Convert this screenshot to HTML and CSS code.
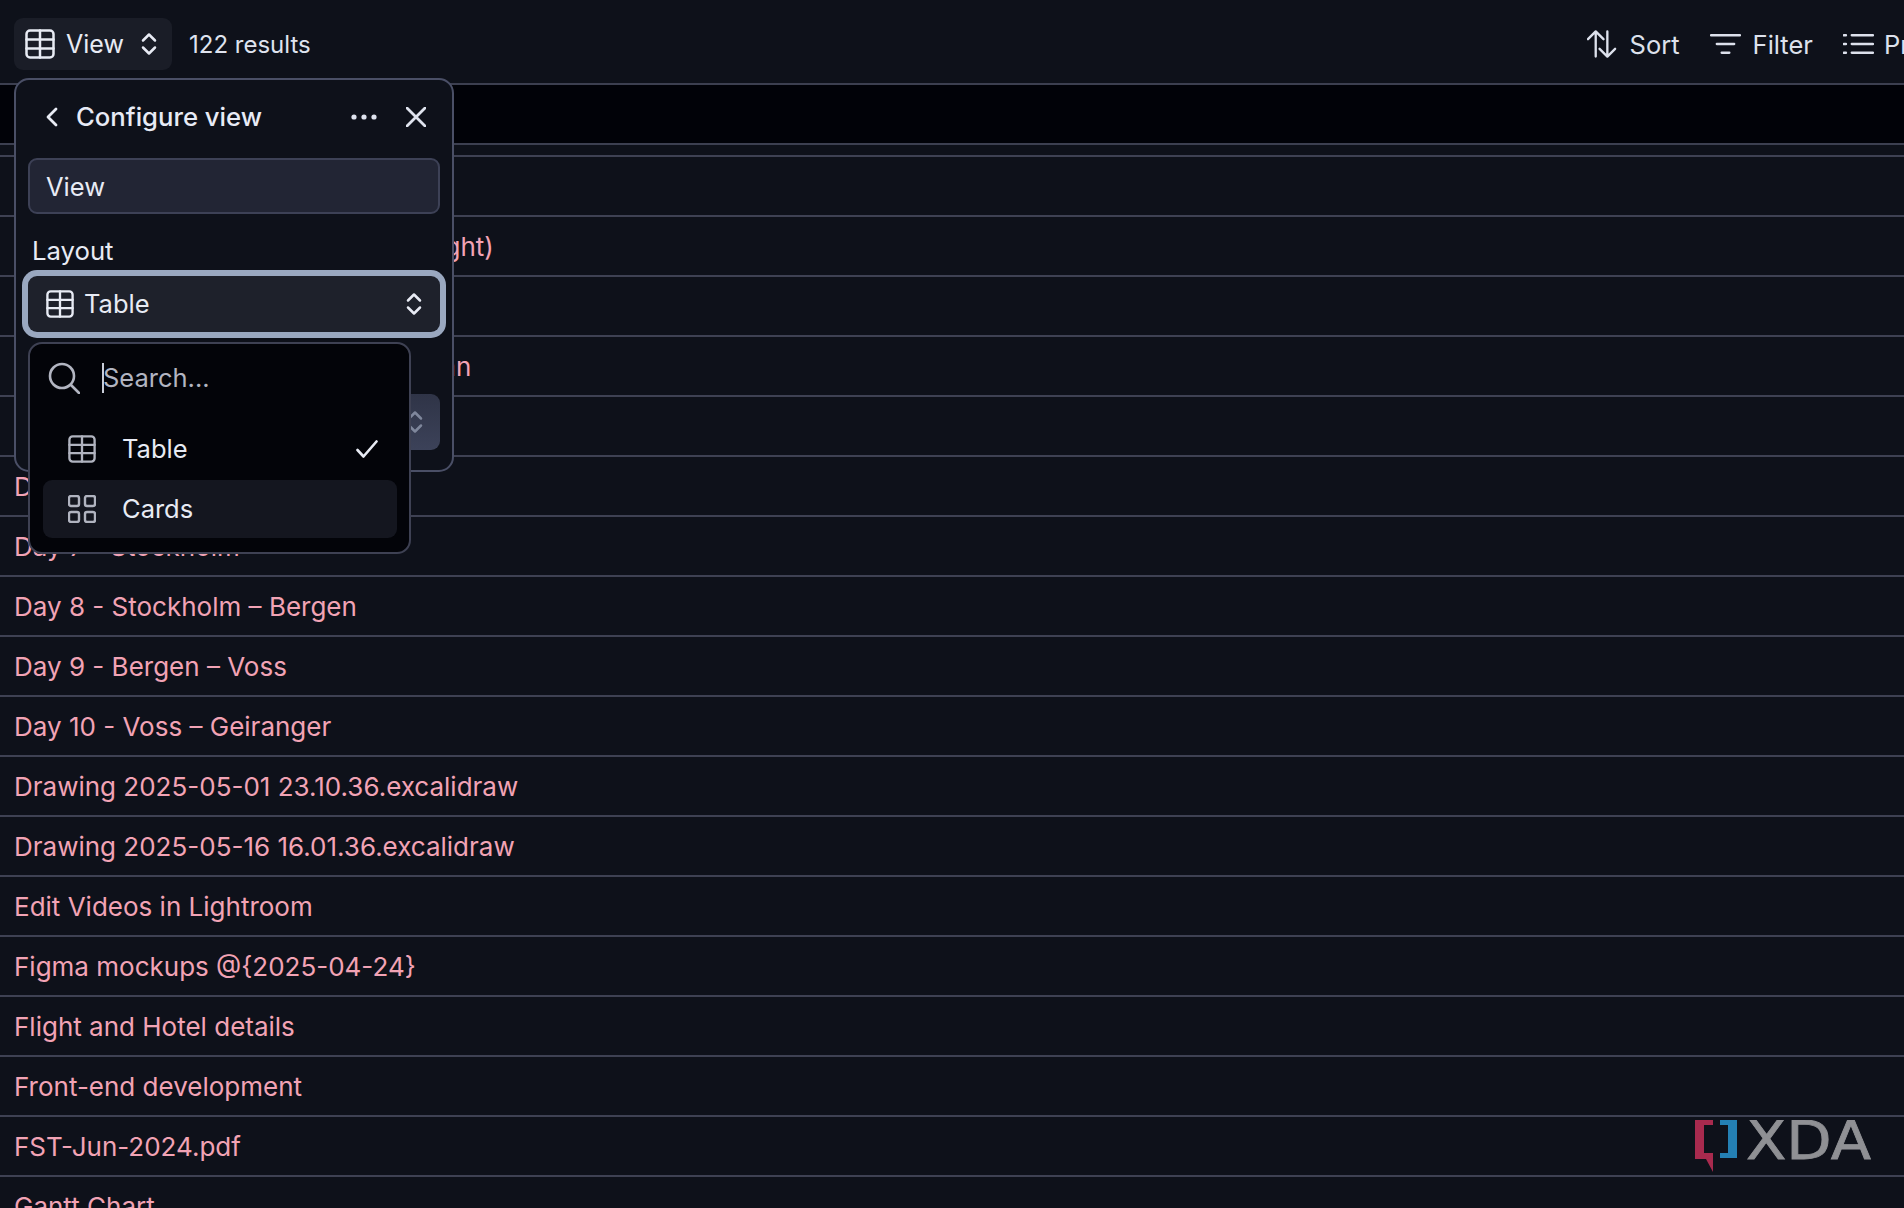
FILE: index.html
```html
<!DOCTYPE html>
<html lang="en">
<head>
<meta charset="utf-8">
<title>Configure view</title>
<link rel="stylesheet" href="styles.css">
</head>
<body>
<svg class="defs" width="0" height="0" aria-hidden="true">
  <symbol id="i-table" viewBox="0 0 30 30"><rect x="1.5" y="1.5" width="27" height="27" rx="3.5"/><path d="M1.5 10.5h27M1.5 19.5h27M15 1.5v27"/></symbol>
  <symbol id="i-updown" viewBox="0 0 16 24"><path d="M2 8.500 8 2.500l6 6M2 15.500 8 21.500l6-6"/></symbol>
</svg>
<main class="page">
  <header class="toolbar">
    <button class="view-btn"><svg class="ic ic-table-lg"><use href="#i-table"/></svg><span>View</span><svg class="ic ic-updown"><use href="#i-updown"/></svg></button>
    <span class="results">122 results</span>
    <div class="actions">
      <span class="action action-sort"><svg class="ic ic-act" viewBox="0 0 32 30"><path d="M10 28V2M2 10l8-8 8 8M22 2v26M14 20l8 8 8-8" transform="translate(-1 0)"/></svg>Sort</span>
      <span class="action action-filter"><svg class="ic ic-act" viewBox="0 0 32 24"><path d="M1 3h30M7 12h18M12 21h8"/></svg>Filter</span>
      <span class="action action-props"><svg class="ic ic-act" viewBox="0 0 32 24"><path d="M9 3h22M9 12h22M9 21h22"/><path class="dots" d="M1 3h2M1 12h2M1 21h2"/></svg>Properties</span>
    </div>
  </header>
  <section class="table">
    <div class="thead"></div>
    <div class="gap"></div>
    <div class="row">Day 1 - Packing list</div>
    <div class="row">Day 2 - Dublin – Stockholm (Overnight)</div>
    <div class="row">Day 3 - Stockholm</div>
    <div class="row">Day 4 - Stockholm Stay – Gamla Stan</div>
    <div class="row">Day 5 - Stockholm</div>
    <div class="row">Day 6 - Stockholm</div>
    <div class="row">Day 7 - Stockholm</div>
    <div class="row">Day 8 - Stockholm – Bergen</div>
    <div class="row">Day 9 - Bergen – Voss</div>
    <div class="row">Day 10 - Voss – Geiranger</div>
    <div class="row">Drawing 2025-05-01 23.10.36.excalidraw</div>
    <div class="row">Drawing 2025-05-16 16.01.36.excalidraw</div>
    <div class="row">Edit Videos in Lightroom</div>
    <div class="row">Figma mockups @{2025-04-24}</div>
    <div class="row">Flight and Hotel details</div>
    <div class="row">Front-end development</div>
    <div class="row">FST-Jun-2024.pdf</div>
    <div class="row">Gantt Chart</div>
  </section>

  <aside class="panel">
    <div class="panel-head">
      <svg class="ic ic-back" viewBox="0 0 12 20"><path d="M10 2 2 10l8 8"/></svg>
      <span class="panel-title">Configure view</span>
      <svg class="ic-more" viewBox="0 0 26 6"><circle cx="3" cy="3" r="2.600"/><circle cx="13" cy="3" r="2.600"/><circle cx="23" cy="3" r="2.600"/></svg>
      <svg class="ic ic-close" viewBox="0 0 20 20"><path d="m1 1 18 18M19 1 1 19"/></svg>
    </div>
    <div class="input">View</div>
    <div class="label">Layout</div>
    <div class="select"><svg class="ic ic-table-sm"><use href="#i-table"/></svg><span>Table</span><svg class="ic ic-updown"><use href="#i-updown"/></svg></div>
    <div class="select-behind"><svg class="ic ic-updown"><use href="#i-updown"/></svg></div>
  </aside>

  <div class="dropdown">
    <div class="search">
      <svg class="ic ic-search" viewBox="0 0 32 32"><circle cx="14" cy="14" r="12"/><path d="m23 23 8 8"/></svg>
      <span class="caret"></span><span class="placeholder">Search...</span>
    </div>
    <div class="option"><svg class="ic ic-table-sm"><use href="#i-table"/></svg><span>Table</span><svg class="ic ic-check" viewBox="0 0 22 18"><path d="m1.500 10 6 6.500L20.500 1.500"/></svg></div>
    <div class="option option-hover"><svg class="ic ic-cards" viewBox="0 0 28 28"><rect x="1" y="1" width="10" height="10" rx="2"/><rect x="17" y="1" width="10" height="10" rx="2"/><rect x="1" y="17" width="10" height="10" rx="2"/><rect x="17" y="17" width="10" height="10" rx="2"/></svg><span>Cards</span></div>
  </div>

  <svg class="xda" viewBox="0 0 176 52" role="img" aria-label="XDA">
    <path class="xda-red" d="M0 0h18v5H9v28h9v19l-7-13H0z"/>
    <path class="xda-blue" d="M25 0h17v38H25v-5h8V5h-8z"/>
    <text class="xda-text" x="51" y="38.500" textLength="125" lengthAdjust="spacingAndGlyphs">XDA</text>
  </svg>
</main>
</body>
</html>
```

FILE: styles.css
```css
* { box-sizing: border-box; }
html, body { margin: 0; height: 100%; }
body {
  background: #0e111a;
  color: #e8ebf4;
  font-family: Inter, "Noto Sans", sans-serif;
  overflow: hidden;
}
.defs { position: absolute; }
.page { position: relative; height: 1208px; overflow: hidden; }

.ic { fill: none; stroke: currentColor; stroke-width: 2.500; stroke-linecap: round; stroke-linejoin: round; flex: none; display: block; }
.ic-table-lg { width: 30px; height: 30px; stroke-width: 2.500; }
.ic-table-sm { width: 28px; height: 28px; }
.ic-updown { width: 16px; height: 24px; }

.toolbar {
  height: 83px;
  display: flex;
  align-items: center;
  padding: 0 0 0 14px;
  font-size: 24px;
  white-space: nowrap;
  overflow: hidden;
}
.view-btn {
  display: flex;
  align-items: center;
  width: 158px;
  height: 52px;
  margin-top: 5px;
  padding: 0 0 0 11px;
  background: #1a1d27;
  border: 0;
  border-radius: 9px;
  color: inherit;
  font: inherit;
  font-size: 25px;
}
.view-btn span { margin-left: 11px; }
.view-btn .ic-updown { margin-left: 17px; }
.results { margin: 5px 0 0 17px; color: #dfe3ee; }
.actions { margin-left: auto; display: flex; align-items: center; margin-top: 5px; margin-right: -104px; color: #dde1ec; font-size: 25.500px; }
.action { display: flex; align-items: center; gap: 12px; }
.action-filter { margin-left: 30px; }
.action-props { margin-left: 28px; }
.action-props .ic-act { margin-right: -2px; margin-left: 2px; }
.ic-act { width: 31px; height: 28px; stroke-width: 2.400; }
.action-sort .ic-act { height: 30px; }
.dots { stroke-width: 2.600; }

.thead { height: 62px; background: #010208; border-top: 2px solid #3c3f50; border-bottom: 2px solid #3c3f50; }
.gap { height: 10px; }
.row {
  height: 60px;
  display: flex;
  align-items: center;
  padding: 0 0 0 14px;
  border-top: 2px solid #3e4153;
  color: #f2a3b5;
  font-size: 26px;
  white-space: nowrap;
}

.panel {
  position: absolute;
  left: 14px;
  top: 78px;
  width: 440px;
  height: 394px;
  padding: 0 12px;
  background: #0e111a;
  border: 2px solid #4a4f66;
  border-radius: 15px;
}
.panel-head { display: flex; align-items: center; height: 73px; margin-bottom: 5px; font-size: 25.700px; }
.ic-back { width: 12px; height: 20px; margin-left: 18px; stroke-width: 2.800; }
.panel-title { margin-left: 18px; font-weight: 500; color: #e8ebf6; }
.ic-more { width: 26px; height: 6px; margin-left: auto; margin-right: 29px; fill: #dfe3ee; }
.ic-close { width: 20px; height: 20px; margin-right: 14px; stroke-width: 2.800; color: #dfe3ee; }
.input {
  height: 56px;
  padding-left: 16px;
  display: flex;
  align-items: center;
  background: #222534;
  border: 2px solid #3d4156;
  border-radius: 9px;
  font-size: 25.500px;
}
.label { margin: 20px 0 0 4px; height: 34px; font-size: 25.700px; line-height: 34px; color: #e8ebf4; }
.select {
  position: relative;
  height: 56px;
  margin-top: 8px;
  padding: 0 18px;
  display: flex;
  align-items: center;
  background: #1e212b;
  border-radius: 9px;
  box-shadow: 0 0 0 6px #9aa8c0;
  font-size: 25.500px;
}
.select span { margin: 0 0 2px 10px; }
.select .ic-updown { margin-left: auto; }
.select-behind {
  height: 56px;
  margin-top: 62px;
  padding-right: 17px;
  display: flex;
  align-items: center;
  justify-content: flex-end;
  background: linear-gradient(180deg, #2f3447, #3c4259);
  border-radius: 9px;
  color: #7f879c;
}

.dropdown {
  position: absolute;
  left: 28px;
  top: 342px;
  width: 383px;
  height: 212px;
  padding: 0 12px 0 13px;
  background: #030409;
  border: 2px solid #3e4153;
  border-radius: 14px;
}
.search { height: 76px; padding: 0 0 9px 5px; display: flex; align-items: center; font-size: 25.500px; color: #b2b5c1; }
.ic-search { width: 32px; height: 32px; stroke-width: 2.600; }
.caret { width: 2px; height: 30px; margin-left: 22px; background: #c9cdd8; }
.placeholder { margin-left: -1px; }
.option {
  height: 58px;
  padding: 0 19px 0 25px;
  display: flex;
  align-items: center;
  font-size: 25.500px;
  border-radius: 9px;
  color: #e8ebf4;
}
.option .ic-table-sm, .ic-cards { color: #b0b3bf; width: 28px; height: 28px; }
.ic-cards { stroke-width: 2.400; }
.option span { margin: 0 0 2px 26px; }
.ic-check { width: 22px; height: 18px; margin-left: auto; stroke-width: 2.600; }
.option-hover { background: #14161f; margin-top: 2px; }

.xda { position: absolute; left: 1695px; top: 1120px; width: 176px; height: 52px; }
.xda-red { fill: #a82a4e; }
.xda-blue { fill: #2480b4; }
.xda-text { fill: #8f9094; stroke: #8f9094; stroke-width: 0.800px; font-family: "DejaVu Sans", sans-serif; font-size: 53px; }
```
